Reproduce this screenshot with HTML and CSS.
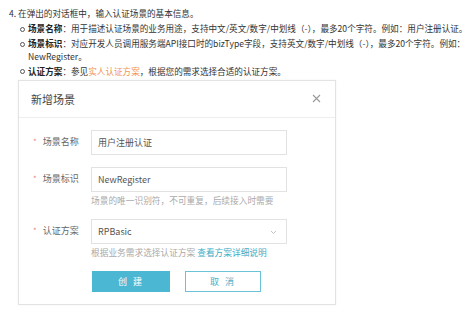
FILE: index.html
```html
<!DOCTYPE html>
<html lang="zh">
<head>
<meta charset="utf-8">
<link rel="stylesheet" href="styles.css">
</head>
<body>
<div class="doc">
  <p class="step">4. 在弹出的对话框中，输入认证场景的基本信息。</p>
  <ul class="items">
    <li><b>场景名称</b>：用于描述认证场景的业务用途，支持中文/英文/数字/中划线（-），最多20个字符。例如：用户注册认证。</li>
    <li><b>场景标识</b>：对应开发人员调用服务端API接口时的bizType字段，支持英文/数字/中划线（-），最多20个字符。例如：<span class="wrap">NewRegister。</span></li>
    <li><b>认证方案</b>：参见<span class="orange">实人认证方案</span>，根据您的需求选择合适的认证方案。</li>
  </ul>
  <div class="dialog">
    <div class="dlg-head">
      <span class="dlg-title">新增场景</span>
      <svg class="close" width="9" height="9" viewBox="0 0 9 9"><path d="M1 1L8 8M8 1L1 8" stroke="#999" stroke-width="1.1" fill="none"/></svg>
    </div>
    <div class="dlg-body">
      <div class="row">
        <label class="lbl"><span class="req">*</span>场景名称</label>
        <div class="field"><div class="input">用户注册认证</div></div>
      </div>
      <div class="row">
        <label class="lbl"><span class="req">*</span>场景标识</label>
        <div class="field">
          <div class="input">NewRegister</div>
          <div class="hint">场景的唯一识别符，不可重复，后续接入时需要</div>
        </div>
      </div>
      <div class="row">
        <label class="lbl"><span class="req">*</span>认证方案</label>
        <div class="field">
          <div class="input select">RPBasic
            <svg class="chev" width="7" height="5" viewBox="0 0 7 5"><path d="M1 1L3.5 3.5L6 1" stroke="#bbb" stroke-width="0.9" fill="none"/></svg>
          </div>
          <div class="hint">根据业务需求选择认证方案 <span class="link">查看方案详细说明</span></div>
        </div>
      </div>
      <div class="btns">
        <button class="btn primary">创 建</button>
        <button class="btn ghost">取 消</button>
      </div>
    </div>
  </div>
</div>
</body>
</html>
```
FILE: styles.css
```css
html, body {
  margin: 0;
  padding: 0;
  background: #fff;
}
body {
  font-family: "Noto Sans CJK SC", "Noto Sans", sans-serif;
  color: #333;
  width: 474px;
  height: 310px;
  overflow: hidden;
}
.doc {
  padding: 7px 0 0 9px;
}
.step {
  margin: 0;
  font-size: 8.6px;
  line-height: 12px;
}
.items {
  margin: 3px 0 0 0;
  padding: 0 0 0 19px;
  list-style: none;
}
.items li {
  position: relative;
  font-size: 8.6px;
  line-height: 12.5px;
  margin-bottom: 2.5px;
  width: 440px;
}
.items li::before {
  content: "";
  position: absolute;
  left: -8px;
  top: 4.7px;
  width: 3px;
  height: 3px;
  border: 0.8px solid #555;
  border-radius: 50%;
}
.items b {
  font-weight: 700;
  color: #222;
}
.wrap {
  display: block;
}
.orange {
  color: #f39254;
}
.dialog {
  margin: 0.5px 0 0 9px;
  width: 318px;
  height: 225px;
  border: 1px solid #e3e3e3;
  box-shadow: 0 0 2px rgba(0,0,0,0.06);
  box-sizing: border-box;
}
.dlg-head {
  height: 37px;
  border-bottom: 1px solid #eee;
  display: flex;
  align-items: center;
  justify-content: space-between;
  padding: 0 14px 0 12px;
  box-sizing: border-box;
}
.dlg-title {
  font-size: 11px;
  color: #444;
}
.close {
  display: block;
}
.dlg-body {
  padding: 12px 0 0 14px;
}
.row {
  display: flex;
  align-items: flex-start;
  margin-bottom: 12px;
}
.lbl {
  width: 58px;
  height: 24px;
  line-height: 24px;
  font-size: 9px;
  color: #666;
  flex: none;
}
.req {
  color: #e9898a;
  margin-right: 6px;
  font-size: 8px;
}
.field {
  width: 196px;
}
.input {
  height: 25px;
  border: 1px solid #e2e2e2;
  box-sizing: border-box;
  padding: 0 6px;
  font-size: 9px;
  line-height: 23px;
  color: #555;
  position: relative;
}
.select .chev {
  position: absolute;
  right: 9px;
  top: 10px;
}
.hint {
  font-size: 8.7px;
  line-height: 12px;
  color: #aaa;
  margin-top: 3px;
  white-space: nowrap;
}
.link {
  color: #3aaec7;
}
.btns {
  display: flex;
  gap: 15px;
  margin-left: 59px;
  margin-top: 0;
}
.btn {
  font-family: inherit;
  height: 21px;
  font-size: 9px;
  padding: 0;
  box-sizing: border-box;
  letter-spacing: 2px;
}
.primary {
  width: 78px;
  background: #4cb7d3;
  border: 1px solid #4cb7d3;
  color: #fff;
}
.ghost {
  width: 76px;
  background: #fff;
  border: 1px solid #6cc3d8;
  color: #4aaec7;
}
```
